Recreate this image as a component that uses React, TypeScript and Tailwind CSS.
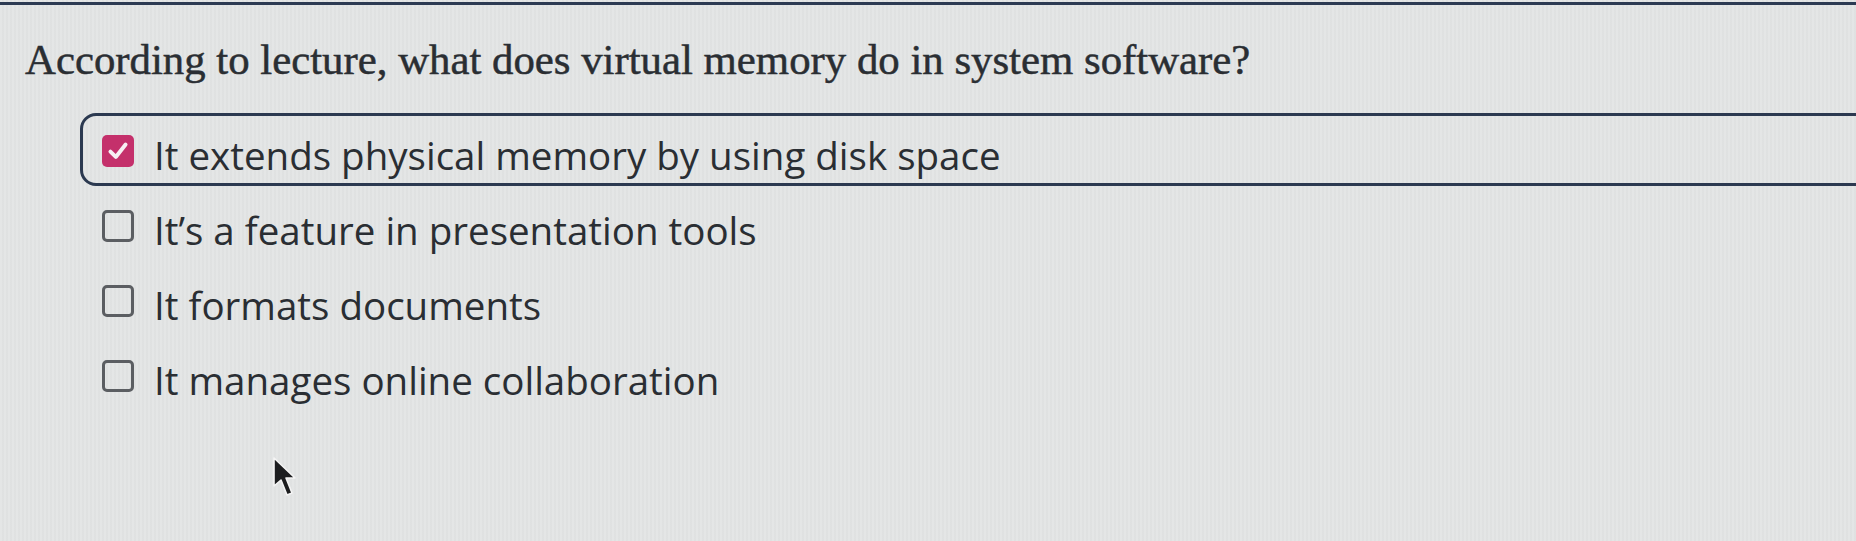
import { useState } from "react";

type Choice = { id: string; label: string };

const choices: Choice[] = [
  { id: "a", label: "It extends physical memory by using disk space" },
  { id: "b", label: "It\u2019s a feature in presentation tools" },
  { id: "c", label: "It formats documents" },
  { id: "d", label: "It manages online collaboration" },
];

export default function App() {
  const [picked, setPicked] = useState<string[]>(["a"]);

  const toggle = (id: string) =>
    setPicked((p) => (p.includes(id) ? p.filter((x) => x !== id) : [...p, id]));

  return (
    <div className="relative h-[541px] w-full overflow-hidden bg-[#e1e3e3] bg-[repeating-linear-gradient(90deg,#e4e6e6_0px,#e4e6e6_2px,#dbdddd_3px,#e4e6e6_4px)]">
      {/* top edge of question card */}
      <div className="h-[2px]" />
      <div className="h-[3px] bg-[#2c3a52]" />

      {/* Question */}
      <h2 className="pl-[25px] pt-[31px] font-['Liberation_Serif',serif] text-[42.8px] leading-[48px] text-[#2a2e33] [-webkit-text-stroke:0.5px_#2a2e33]">
        According to lecture, what does virtual memory do in system software?
      </h2>

      {/* Answers */}
      <ul className="mt-[28px] pl-[80px] font-['Open_Sans',sans-serif] text-[38.5px] text-[#2a2e33]">
        {choices.map((c) => {
          const on = picked.includes(c.id);
          return (
            <li key={c.id} className="h-[75px] py-[1px]">
              <label
                onClick={() => toggle(c.id)}
                className={[
                  "flex h-full w-[1800px] cursor-pointer items-center gap-[20px] pl-[19px]",
                  on
                    ? "rounded-[16px] border-[3px] border-[#2b3950]"
                    : "border-[3px] border-transparent",
                ].join(" ")}
              >
                <CheckBox on={on} />
                <span className="pt-[12px] leading-none">{c.label}</span>
              </label>
            </li>
          );
        })}
      </ul>

      {/* mouse pointer */}
      <svg
        className="absolute left-[271px] top-[456px] h-[42px] w-[28px]"
        viewBox="0 0 28 42"
        aria-hidden="true"
      >
        <path
          d="M3 2 L3 30 L10 24 L16 39 L21 37 L15 22 L24 22 Z"
          fill="#1c1d1f"
          stroke="#f4f4f4"
          strokeWidth="1.6"
          strokeLinejoin="round"
        />
      </svg>
    </div>
  );
}

function CheckBox({ on }: { on: boolean }) {
  if (on) {
    return (
      <span className="mt-[3px] flex h-[32px] w-[32px] shrink-0 items-center justify-center rounded-[5px] bg-[#c4306b]">
        <svg viewBox="0 0 24 24" className="h-[26px] w-[26px]" aria-hidden="true">
          <path
            d="M5 12.5 L10 17.5 L19 6"
            fill="none"
            stroke="#f7eef2"
            strokeWidth="3.6"
            strokeLinecap="round"
            strokeLinejoin="round"
          />
        </svg>
      </span>
    );
  }
  return (
    <span className="mt-[3px] h-[32px] w-[32px] shrink-0 rounded-[5px] border-[3px] border-[#5b5e62]" />
  );
}
